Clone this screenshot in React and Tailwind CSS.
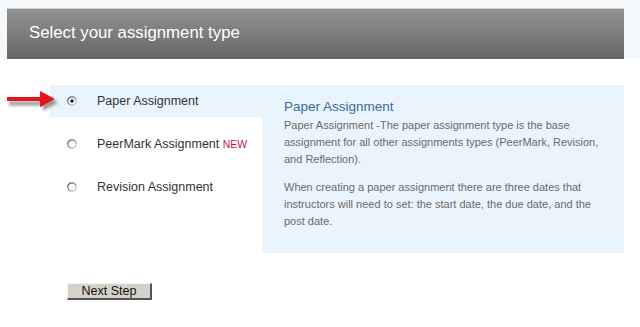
import React from "react";

function Radio({ checked }) {
  return (
    <svg width="10" height="10" viewBox="0 0 10 10" className="shrink-0">
      <defs>
        <linearGradient id={checked ? "rg1" : "rg0"} x1="0" y1="0" x2="1" y2="1">
          <stop offset="0" stopColor="#444" />
          <stop offset="1" stopColor="#ddd" />
        </linearGradient>
      </defs>
      <circle cx="5" cy="5" r="4.2" fill="#fff" stroke={`url(#${checked ? "rg1" : "rg0"})`} strokeWidth="1.2" />
      {checked && <circle cx="5" cy="5" r="1.7" fill="#111" />}
    </svg>
  );
}

export default function App() {
  return (
    <div
      className="relative w-[640px] h-[327px] overflow-hidden bg-white"
      style={{ fontFamily: '"Liberation Sans", Arial, sans-serif' }}
    >
      <div className="bg-[#f5f8fb] pt-[8px] px-[7px]">
        <div className="w-[617px] h-[51px] border-t border-[#cfcfcf] bg-gradient-to-b from-[#929292] to-[#676767] flex items-center pl-[22px] pb-[2px]">
          <span className="text-white text-[16.8px]">Select your assignment type</span>
        </div>
      </div>

      <div className="flex mt-[26px] ml-[50px]">
        <div className="w-[212px] flex flex-col">
          <div className="h-[32px] bg-[#eaf4fc] flex items-center pl-[17px]">
            <Radio checked />
            <span className="ml-[20px] text-[12.5px] text-[#333]">Paper Assignment</span>
          </div>
          <div className="h-[11px]" />
          <div className="h-[32px] flex items-center pl-[17px]">
            <Radio />
            <span className="ml-[20px] text-[12.5px] text-[#333]">
              PeerMark Assignment <span className="text-[10.5px] text-[#c8143c]">NEW</span>
            </span>
          </div>
          <div className="h-[11px]" />
          <div className="h-[32px] flex items-center pl-[17px]">
            <Radio />
            <span className="ml-[20px] text-[12.5px] text-[#333]">Revision Assignment</span>
          </div>
        </div>
        <div className="w-[362px] h-[168px] bg-[#eaf4fc] pl-[22px] pr-[16px] pt-[14px]">
          <div className="text-[13.5px] leading-[16px] text-[#3a6aa3]">Paper Assignment</div>
          <p className="mt-[2px] text-[11px] leading-[17px] text-[#6a6a6a]">
            Paper Assignment -The paper assignment type is the base assignment for all other assignments types (PeerMark, Revision, and Reflection).
          </p>
          <p className="mt-[11px] text-[11px] leading-[17px] text-[#6a6a6a]">
            When creating a paper assignment there are three dates that instructors will need to set: the start date, the due date, and the post date.
          </p>
        </div>
      </div>

      <div className="ml-[67px] mt-[30px]">
        <button className="w-[85px] h-[17px] bg-[#d6d2ca] border-t border-l border-[#f4f4f4] border-r-2 border-b-2 border-r-[#555] border-b-[#555] text-[12.5px] leading-[14px] text-[#111] flex items-center justify-center">
          Next Step
        </button>
      </div>

      <svg className="absolute left-[4px] top-[88px]" width="58" height="28" viewBox="0 0 58 28">
        <defs>
          <filter id="sh" x="-20%" y="-50%" width="140%" height="200%">
            <feGaussianBlur stdDeviation="1.6" />
          </filter>
        </defs>
        <g filter="url(#sh)" opacity="0.6">
          <rect x="5" y="13.5" width="36" height="4" fill="#555" />
          <polygon points="39,6 54,14.5 39,23" fill="#555" />
        </g>
        <rect x="3" y="9" width="36" height="4" fill="#e8141a" />
        <polygon points="36,3 51,11 36,19" fill="#e8141a" />
      </svg>
    </div>
  );
}
